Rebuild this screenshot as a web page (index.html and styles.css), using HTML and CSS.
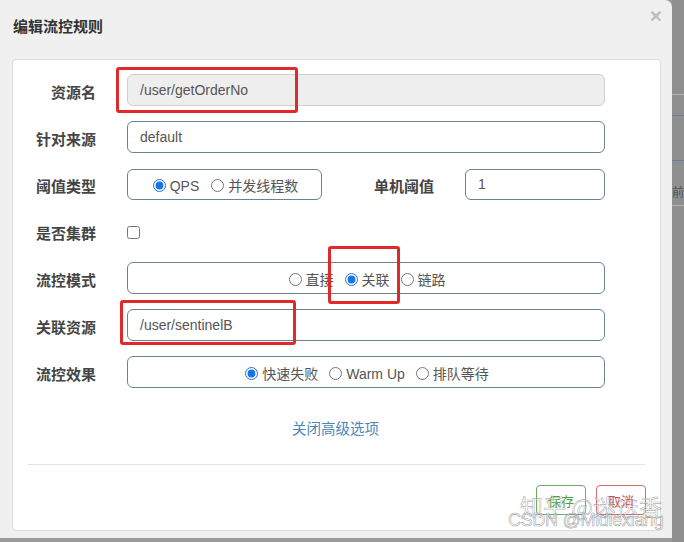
FILE: index.html
```html
<!DOCTYPE html>
<html lang="zh">
<head>
<meta charset="utf-8">
<title>编辑流控规则</title>
<link rel="stylesheet" href="styles.css">
</head>
<body>
<div class="page">
  <div class="dialog">
    <div class="header">
      <h4 class="title">编辑流控规则</h4>
      <span class="close">×</span>
    </div>
    <div class="panel">
      <div class="form">
        <div class="row">
          <div class="label">资源名</div>
          <div class="input disabled">/user/getOrderNo</div>
          <span class="mark mark-res"></span>
        </div>
        <div class="row">
          <div class="label">针对来源</div>
          <div class="input">default</div>
        </div>
        <div class="row">
          <div class="label">阈值类型</div>
          <div class="split">
            <div class="radios box-type">
              <label class="opt"><input type="radio" name="t" checked><span>QPS</span></label>
              <label class="opt"><input type="radio" name="t"><span>并发线程数</span></label>
            </div>
            <div class="label sub">单机阈值</div>
            <div class="input small">1</div>
          </div>
        </div>
        <div class="row">
          <div class="label">是否集群</div>
          <div class="check"><input type="checkbox"></div>
        </div>
        <div class="row">
          <div class="label">流控模式</div>
          <div class="radios">
            <label class="opt"><input type="radio" name="m"><span>直接</span></label>
            <label class="opt"><input type="radio" name="m" checked><span>关联</span></label>
            <label class="opt"><input type="radio" name="m"><span>链路</span></label>
          </div>
          <span class="mark mark-mode"></span>
        </div>
        <div class="row">
          <div class="label">关联资源</div>
          <div class="input">/user/sentinelB</div>
          <span class="mark mark-ref"></span>
        </div>
        <div class="row">
          <div class="label">流控效果</div>
          <div class="radios">
            <label class="opt"><input type="radio" name="e" checked><span>快速失败</span></label>
            <label class="opt"><input type="radio" name="e"><span>Warm Up</span></label>
            <label class="opt"><input type="radio" name="e"><span>排队等待</span></label>
          </div>
        </div>
      </div>
      <div class="link-row"><a class="link">关闭高级选项</a></div>
      <div class="divider"></div>
      <div class="actions">
        <button class="btn save">保存</button>
        <button class="btn cancel">取消</button>
      </div>
      <div class="watermark">
        <span class="wm-zh">知乎 @迷迭香</span>
        <span class="wm-en">CSDN @Midiexiang</span>
      </div>
    </div>
  </div>
  <div class="behind">
    <div class="behind-line l1"></div>
    <div class="behind-line l2"></div>
    <div class="behind-line l3"></div>
    <div class="behind-text">前</div>
    <div class="behind-line l4"></div>
  </div>
</div>
</body>
</html>
```

FILE: styles.css
```css
* { box-sizing: border-box; }
html, body { margin: 0; padding: 0; }
body {
  width: 684px;
  height: 542px;
  overflow: hidden;
  background: #9a9a9a;
  font-family: "Liberation Sans", "Noto Sans CJK SC", sans-serif;
  color: #555;
}
.page {
  display: flex;
  width: 684px;
  height: 542px;
}
.dialog {
  width: 674px;
  height: 538px;
  background: #f0f0f0;
  border-top-right-radius: 7px;
  position: relative;
}
.behind {
  flex: 1;
  height: 542px;
  background: #8f8f8f;
  display: flex;
  flex-direction: column;
}
.behind-line { height: 1px; background: #b4b4b4; }
.behind-line.l1 { margin-top: 94px; }
.behind-line.l2 { margin-top: 20px; background: #6a7f94; }
.behind-line.l3 { margin-top: 44px; background: #6a7f94; }
.behind-text { margin-top: 24px; font-size: 12px; color: #555; line-height: 14px; font-family: "Noto Sans CJK SC", sans-serif; }
.behind-line.l4 { margin-top: 6px; }

.header {
  height: 59px;
  display: flex;
  justify-content: space-between;
  padding: 0 0 0 13px;
}
.title {
  margin: 15px 0 0 0;
  font-family: "Noto Sans CJK SC", sans-serif;
  font-size: 15px;
  font-weight: 700;
  line-height: 22px;
  color: #333;
}
.close {
  margin: 4px 10px 0 0;
  font-size: 21px;
  line-height: 24px;
  font-weight: 700;
  color: #bdbdbd;
  font-family: "Liberation Sans", sans-serif;
}
.panel {
  position: relative;
  margin-left: 12px;
  width: 649px;
  height: 472px;
  background: #fff;
  border: 1px solid #dcdcdc;
  border-radius: 4px;
  padding-top: 14px;
}
.form {
  display: flex;
  flex-direction: column;
  gap: 15px;
}
.row {
  position: relative;
  display: flex;
  align-items: center;
  height: 32px;
}
.label {
  width: 84px;
  padding-right: 1px;
  padding-top: 3px;
  text-align: right;
  font-family: "Noto Sans CJK SC", sans-serif;
  font-weight: 700;
  font-size: 15px;
  color: #444;
  margin-right: 30px;
  flex: none;
}
.input {
  width: 478px;
  height: 32px;
  border: 1px solid #6b8296;
  border-radius: 6px;
  padding: 0 12px;
  display: flex;
  align-items: center;
  font-size: 14px;
  color: #555;
}
.input.disabled {
  background: #eeeeee;
  border-color: #cfcfcf;
}
.split {
  display: flex;
  align-items: center;
  width: 478px;
  height: 32px;
}
.radios {
  width: 478px;
  height: 32px;
  border: 1px solid #6b8296;
  border-radius: 6px;
  display: flex;
  align-items: center;
  justify-content: center;
  gap: 11px;
  font-family: "Noto Sans CJK SC", sans-serif;
  font-size: 14px;
  color: #555;
  padding-left: 2px;
  padding-top: 3px;
}
.radios.box-type {
  width: 195px;
  height: 31px;
  padding-left: 2px;
  gap: 12px;
}
.opt {
  display: inline-flex;
  align-items: center;
  gap: 4px;
  line-height: 20px;
}
.opt span { font-family: "Liberation Sans", "Noto Sans CJK SC", sans-serif; }
.opt input {
  margin: 0;
  width: 13px;
  height: 13px;
  accent-color: #1a73e8;
}
.label.sub {
  width: 113px;
  margin-right: 30px;
  padding-top: 3px;
}
.input.small {
  width: 140px;
  height: 31px;
}
.check {
  display: flex;
  align-items: center;
  padding-top: 3px;
}
.check input {
  margin: 0;
  width: 13px;
  height: 13px;
}
.mark {
  position: absolute;
  border: 3px solid #e02a2a;
  border-radius: 3px;
  pointer-events: none;
}
.mark-res { left: 103px; top: -7px; width: 182px; height: 46px; }
.mark-mode { left: 315px; top: -16px; width: 72px; height: 58px; }
.mark-ref { left: 107px; top: -9px; width: 176px; height: 45px; }

.link-row {
  margin-top: 30px;
  text-align: center;
  height: 20px;
  padding-right: 2px;
}
.link {
  font-family: "Noto Sans CJK SC", sans-serif;
  font-size: 14.5px;
  line-height: 20px;
  color: #4e86b8;
  text-decoration: none;
}
.divider {
  margin: 26px 15px 0 15px;
  height: 1px;
  background: #e3e3e3;
}
.actions {
  margin-top: 20px;
  display: flex;
  justify-content: flex-end;
  gap: 10px;
  padding-right: 14px;
}
.btn {
  width: 50px;
  height: 30px;
  background: #fff;
  border: 1px solid;
  border-radius: 4px;
  font-family: "Noto Sans CJK SC", sans-serif;
  font-size: 13px;
  padding: 0;
}
.btn.save { border-color: #6aaa6a; color: #4aa34a; }
.btn.cancel { border-color: #d46a6a; color: #d24a4a; }

.watermark {
  position: absolute;
  right: -8px;
  bottom: -2px;
  width: 160px;
  height: 40px;
  pointer-events: none;
}
.wm-zh {
  position: absolute;
  left: 12px;
  top: 0;
  font-family: "Noto Sans CJK SC", sans-serif;
  font-size: 23px;
  line-height: 28px;
  color: rgba(255,255,255,0.55);
  -webkit-text-stroke: 0.6px rgba(110,110,110,0.55);
  white-space: nowrap;
}
.wm-en {
  position: absolute;
  left: 0;
  top: 18px;
  font-family: "Liberation Sans", sans-serif;
  font-size: 18px;
  line-height: 20px;
  color: rgba(255,255,255,0.6);
  -webkit-text-stroke: 0.6px rgba(100,100,100,0.6);
  white-space: nowrap;
  letter-spacing: -0.3px;
}
```
